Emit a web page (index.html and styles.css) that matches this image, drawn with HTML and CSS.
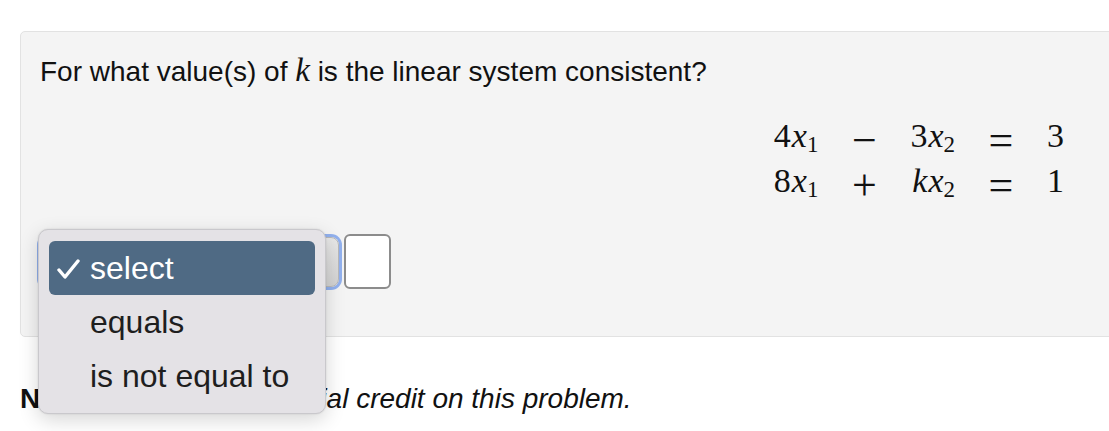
FILE: index.html
```html
<!DOCTYPE html>
<html>
<head>
<meta charset="utf-8">
<link rel="stylesheet" href="styles.css">
</head>
<body>
<div class="page">
  <div class="panel">
    <p class="question">For what value(s) of <span class="mi">k</span> is the linear system consistent?</p>
    <div class="math-wrap">
      <div class="math">
        <span class="c-r">4<i>x</i><sub>1</sub></span>
        <span class="c-op">−</span>
        <span class="c-r">3<i>x</i><sub>2</sub></span>
        <span class="c-op">=</span>
        <span class="c-l">3</span>
        <span class="c-r">8<i>x</i><sub>1</sub></span>
        <span class="c-op">+</span>
        <span class="c-r"><i>k</i><i>x</i><sub>2</sub></span>
        <span class="c-op">=</span>
        <span class="c-l">1</span>
      </div>
    </div>
    <div class="answer">
      <div class="select"><span class="select-btn"></span></div>
      <div class="input"></div>
    </div>
  </div>
  <p class="note"><b>Note:</b> <i>You can earn partial credit on this problem.</i></p>

  <div class="menu">
    <div class="item active"><svg class="check" width="26" height="20" viewBox="0 0 26 20"><path d="M3 11 L9 18 L22 2" fill="none" stroke="#fff" stroke-width="3.4" stroke-linecap="round" stroke-linejoin="round"/></svg>select</div>
    <div class="item">equals</div>
    <div class="item">is not equal to</div>
  </div>
</div>
</body>
</html>
```

FILE: styles.css
```css
html, body {
  margin: 0;
  padding: 0;
  background: #ffffff;
  overflow: hidden;
}
body {
  font-family: "Liberation Sans", Arial, sans-serif;
  color: #111;
  width: 1109px;
  height: 431px;
}
.page {
  position: relative;
  padding: 31px 0 0 20px;
}
.panel {
  width: 1100px;
  height: 306px;
  box-sizing: border-box;
  background: #f4f4f4;
  border: 1px solid #e2e2e2;
  border-radius: 5px;
  padding: 21px 0 0 19px;
  display: flex;
  flex-direction: column;
}
.question {
  margin: 0;
  font-size: 28px;
  line-height: 34px;
}
.mi {
  font-family: "Liberation Serif", "Times New Roman", serif;
  font-style: italic;
  font-size: 33px;
}
.math-wrap {
  display: flex;
  justify-content: flex-end;
  padding-right: 55px;
  margin-top: 24px;
}
.math {
  display: grid;
  grid-template-columns: auto 22px auto 22px auto;
  column-gap: 35px;
  row-gap: 0;
  font-family: "Liberation Serif", "Times New Roman", serif;
  font-size: 34px;
  line-height: 45px;
  color: #111;
}
.math i {
  font-style: italic;
  margin-left: 1px;
}
.math sub {
  font-size: 23px;
  vertical-align: -5px;
  line-height: 0;
}
.c-r { text-align: right; }
.c-l { text-align: left; }
.c-op {
  display: flex;
  justify-content: center;
  font-size: 44px;
  line-height: 55px;
  height: 45px;
  overflow: visible;
}
.answer {
  display: flex;
  align-items: center;
  margin-top: 31px;
  gap: 5px;
}
.select {
  width: 299px;
  height: 50px;
  box-sizing: border-box;
  border-radius: 8px;
  background: linear-gradient(#e8e8e8, #d2d2d2);
  border: 1px solid #b8b8b8;
  box-shadow: 0 0 0 3px #92b1ee;
  display: flex;
  justify-content: flex-end;
}
.select-btn {
  width: 12px;
}
.input {
  width: 47px;
  height: 55px;
  box-sizing: border-box;
  border: 2px solid #8c8c8c;
  border-radius: 6px;
  background: #fff;
}
.note {
  margin: 45px 0 0 0;
  font-size: 28px;
  line-height: 34px;
  color: #111;
}
.menu {
  position: absolute;
  left: 38px;
  top: 229px;
  width: 288px;
  box-sizing: border-box;
  padding: 11px 10px 10px 10px;
  background: #e4e2e6;
  border: 1px solid #c9c8cc;
  border-radius: 10px;
  box-shadow: 0 6px 20px rgba(0,0,0,0.16), 0 0 2px rgba(0,0,0,0.12);
  font-family: "Liberation Sans", Arial, sans-serif;
  font-size: 32px;
  color: #1e1e1e;
}
.item {
  height: 54px;
  line-height: 54px;
  padding-left: 41px;
  border-radius: 6px;
  position: relative;
}
.item.active {
  background: #4f6a84;
  color: #fff;
}
.check {
  position: absolute;
  left: 7px;
  top: 18px;
}
```
